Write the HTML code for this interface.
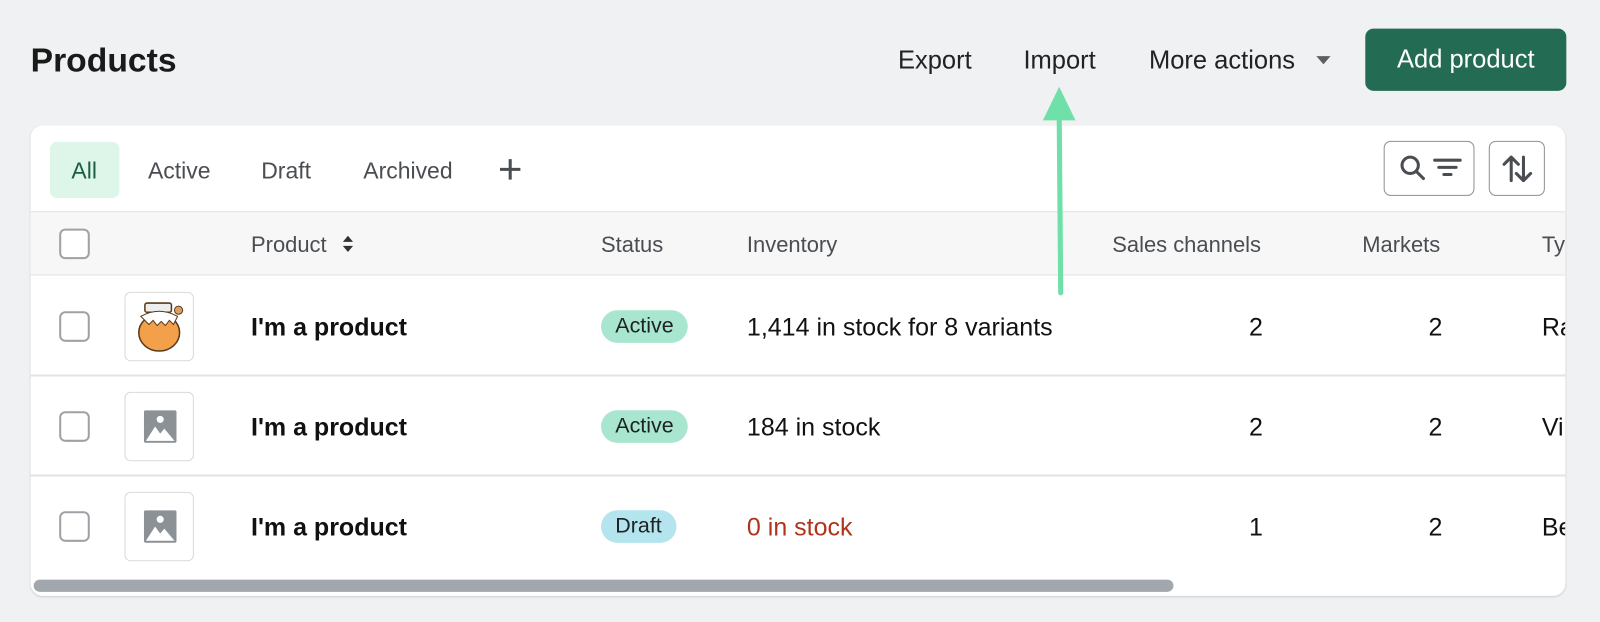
<!DOCTYPE html>
<html><head><style>
*{margin:0;padding:0;box-sizing:border-box}
body{width:1600px;height:622px;background:#f0f1f3;font-family:"Liberation Sans",sans-serif;position:relative;overflow:hidden;color:#202223}
#w{position:absolute;left:0;top:0;width:1568px;height:610px;transform:scale(1.0204);transform-origin:0 0}
.a{position:absolute;white-space:nowrap}
.cb{position:absolute;width:30px;height:30px;border:2.5px solid #9ea1a6;border-radius:6px;background:#fff}
.th{position:absolute;width:68px;height:68px;border:1.5px solid #d8d9db;border-radius:6px;background:#fff}
.pill{position:absolute;height:32px;border-radius:16px;font-size:21px;line-height:32px;padding:0 14px;color:#202223}
.hd{font-size:21.5px;color:#4a4d52;top:228px}
.nm{font-size:24.5px;font-weight:bold;color:#111}
.tx{font-size:24.5px;color:#111}
.tab{font-size:22.5px;color:#4a4d52;top:155px}
.nav{font-size:25px;top:45px}
</style></head><body><div id="w">
<div class="a" style="left:30px;top:40px;font-size:33px;font-weight:bold;color:#1a1a1a">Products</div>
<div class="a nav" style="left:880px">Export</div>
<div class="a nav" style="left:1003px">Import</div>
<div class="a nav" style="left:1126px">More actions</div>
<svg class="a" style="left:1289px;top:54px" width="16" height="10"><path d="M1 1h14l-7 8z" fill="#5c5f62"/></svg>
<div class="a" style="left:1338px;top:28px;width:197px;height:61px;background:#236b52;border-radius:8px;color:#fff;font-size:25px;line-height:61px;text-align:center">Add product</div>

<div class="a" style="left:30px;top:123px;width:1504px;height:461px;background:#fff;border-radius:12px;overflow:hidden;box-shadow:0 1px 2px rgba(0,0,0,.15)">
 <div class="a" style="left:19px;top:16px;width:68px;height:55px;background:#def5ea;border-radius:7px"></div>
 <div class="a" style="left:0;top:84px;width:1504px;height:63px;background:#f7f7f8;border-top:1.5px solid #e1e3e5;border-bottom:1.5px solid #e1e3e5"></div>
 <div class="a" style="left:0;top:244px;width:1504px;height:1.5px;background:#e1e3e5"></div>
 <div class="a" style="left:0;top:342px;width:1504px;height:1.5px;background:#e1e3e5"></div>
 <div class="a" style="left:3px;top:445px;width:1117px;height:12px;background:#a2a6ad;border-radius:6px"></div>
 <div class="a" style="left:1326px;top:15px;width:89px;height:54px;border:1.5px solid #8c9196;border-radius:7px"></div>
 <div class="a" style="left:1429px;top:15px;width:55px;height:54px;border:1.5px solid #8c9196;border-radius:7px"></div>
 <div class="a" style="left:1481px;top:0;width:23px;height:440px;overflow:hidden">
  <div class="a hd" style="left:0;top:105px">Ty</div>
  <div class="a tx" style="left:0;top:185px">Ra</div>
  <div class="a tx" style="left:0;top:283px">Vi</div>
  <div class="a tx" style="left:0;top:381px">Be</div>
 </div>
</div>
<div class="a tab" style="left:70px;color:#1b5e45">All</div>
<div class="a tab" style="left:145px">Active</div>
<div class="a tab" style="left:256px">Draft</div>
<div class="a tab" style="left:356px">Archived</div>
<svg class="a" style="left:489px;top:155px" width="22" height="22"><path d="M11 1v20M1 11h20" stroke="#4a4d52" stroke-width="3"/></svg>
<svg class="a" style="left:1370px;top:151px" width="64" height="30"><circle cx="12" cy="11" r="8" fill="none" stroke="#4a4d52" stroke-width="3"/><path d="M18 17l7 7" stroke="#4a4d52" stroke-width="3" stroke-linecap="round"/><path d="M36 6h25M40 13h17M45 20h7" stroke="#4a4d52" stroke-width="3" stroke-linecap="round"/></svg>
<svg class="a" style="left:1471px;top:151px" width="32" height="30"><path d="M10 26V3M3 10l7-7 7 7M22 3v23M15 19l7 7 7-7" fill="none" stroke="#4a4d52" stroke-width="3" stroke-linecap="round" stroke-linejoin="round"/></svg>

<div class="cb" style="left:58px;top:224px"></div>
<div class="a hd" style="left:246px">Product</div>
<svg class="a" style="left:335px;top:229px" width="12" height="20"><path d="M6 2l5 6H1zM6 18l5-6H1z" fill="#303236"/></svg>
<div class="a hd" style="left:589px">Status</div>
<div class="a hd" style="left:732px">Inventory</div>
<div class="a hd" style="left:1090px">Sales channels</div>
<div class="a hd" style="left:1335px">Markets</div>

<div class="cb" style="left:58px;top:305px"></div>
<div class="th" style="left:122px;top:286px"></div>
<svg class="a" style="left:128px;top:292px" width="56" height="56"><ellipse cx="28" cy="34" rx="20" ry="18" fill="#f3a04a" stroke="#5a3a1a" stroke-width="1.5"/><rect x="14" y="5" width="26" height="9" rx="2" fill="#eee" stroke="#5a3a1a" stroke-width="1.5"/><path d="M10 18q18-10 36 0l-4 8-4-4-4 5-4-4-4 4-4-5-4 4z" fill="#fff" stroke="#5a3a1a" stroke-width="1"/><circle cx="47" cy="12" r="4" fill="#d9a066" stroke="#5a3a1a"/></svg>
<div class="a nm" style="left:246px;top:308px">I'm a product</div>
<div class="pill" style="left:589px;top:304px;background:#a8e6cf">Active</div>
<div class="a tx" style="left:732px;top:308px">1,414 in stock for 8 variants</div>
<div class="a tx" style="left:1224px;top:308px">2</div>
<div class="a tx" style="left:1400px;top:308px">2</div>

<div class="cb" style="left:58px;top:403px"></div>
<div class="th" style="left:122px;top:384px"></div>
<svg class="a" style="left:141px;top:402px" width="32" height="32"><rect x="0" y="0" width="32" height="32" rx="2" fill="#8c9196"/><circle cx="16" cy="9" r="3.5" fill="#fff"/><path d="M2 30l9-14 5 7 4-5 10 12z" fill="#fff"/></svg>
<div class="a nm" style="left:246px;top:406px">I'm a product</div>
<div class="pill" style="left:589px;top:402px;background:#a8e6cf">Active</div>
<div class="a tx" style="left:732px;top:406px">184 in stock</div>
<div class="a tx" style="left:1224px;top:406px">2</div>
<div class="a tx" style="left:1400px;top:406px">2</div>

<div class="cb" style="left:58px;top:501px"></div>
<div class="th" style="left:122px;top:482px"></div>
<svg class="a" style="left:141px;top:500px" width="32" height="32"><rect x="0" y="0" width="32" height="32" rx="2" fill="#8c9196"/><circle cx="16" cy="9" r="3.5" fill="#fff"/><path d="M2 30l9-14 5 7 4-5 10 12z" fill="#fff"/></svg>
<div class="a nm" style="left:246px;top:504px">I'm a product</div>
<div class="pill" style="left:589px;top:500px;background:#b4e5ef">Draft</div>
<div class="a tx" style="left:732px;top:504px;color:#b0341b">0 in stock</div>
<div class="a tx" style="left:1224px;top:504px">1</div>
<div class="a tx" style="left:1400px;top:504px">2</div>

<svg class="a" style="left:1015px;top:80px" width="45" height="212"><path d="M23 5L39 38H7z" fill="#6fe0a8"/><path d="M23 30L24.5 207" stroke="#6fe0a8" stroke-width="5" stroke-linecap="round"/></svg>
</div></body></html>
